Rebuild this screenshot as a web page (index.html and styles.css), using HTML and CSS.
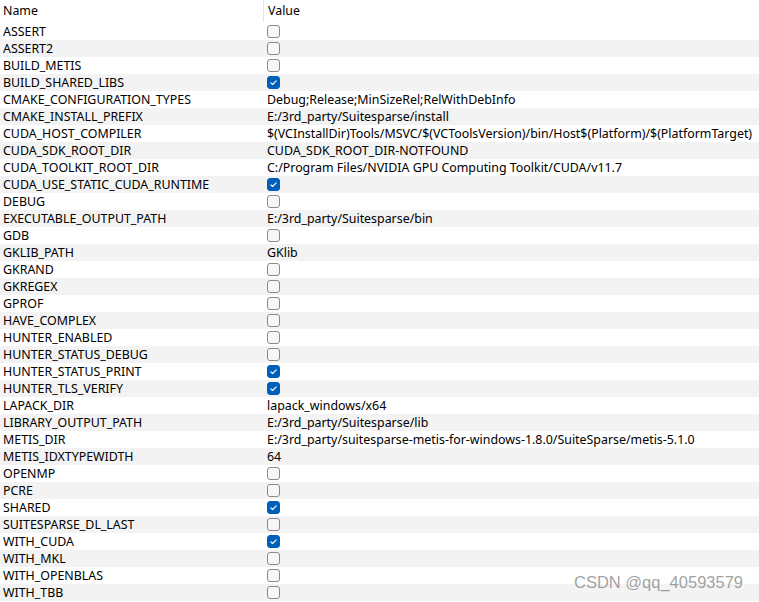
FILE: index.html
```html
<!DOCTYPE html>
<html>
<head>
<meta charset="utf-8">
<link rel="stylesheet" href="styles.css">
</head>
<body>
<div class="table">
  <div class="header">
    <div class="hname">Name</div>
    <div class="hvalue">Value</div>
  </div>
  <div class="row"><div class="name">ASSERT</div><div class="value"><span class="cb"></span></div></div>
  <div class="row"><div class="name">ASSERT2</div><div class="value"><span class="cb"></span></div></div>
  <div class="row"><div class="name">BUILD_METIS</div><div class="value"><span class="cb"></span></div></div>
  <div class="row"><div class="name">BUILD_SHARED_LIBS</div><div class="value"><span class="cb on"><svg viewBox="0 0 13 13" width="13" height="13"><path d="M3.8 6.8 L5.6 8.5 L9.2 4.8" fill="none" stroke="#fff" stroke-width="1.1" stroke-linecap="round" stroke-linejoin="round"/></svg></span></div></div>
  <div class="row"><div class="name">CMAKE_CONFIGURATION_TYPES</div><div class="value">Debug;Release;MinSizeRel;RelWithDebInfo</div></div>
  <div class="row"><div class="name">CMAKE_INSTALL_PREFIX</div><div class="value">E:/3rd_party/Suitesparse/install</div></div>
  <div class="row"><div class="name">CUDA_HOST_COMPILER</div><div class="value">$(VCInstallDir)Tools/MSVC/$(VCToolsVersion)/bin/Host$(Platform)/$(PlatformTarget)</div></div>
  <div class="row"><div class="name">CUDA_SDK_ROOT_DIR</div><div class="value">CUDA_SDK_ROOT_DIR-NOTFOUND</div></div>
  <div class="row"><div class="name">CUDA_TOOLKIT_ROOT_DIR</div><div class="value">C:/Program Files/NVIDIA GPU Computing Toolkit/CUDA/v11.7</div></div>
  <div class="row"><div class="name">CUDA_USE_STATIC_CUDA_RUNTIME</div><div class="value"><span class="cb on"><svg viewBox="0 0 13 13" width="13" height="13"><path d="M3.8 6.8 L5.6 8.5 L9.2 4.8" fill="none" stroke="#fff" stroke-width="1.1" stroke-linecap="round" stroke-linejoin="round"/></svg></span></div></div>
  <div class="row"><div class="name">DEBUG</div><div class="value"><span class="cb"></span></div></div>
  <div class="row"><div class="name">EXECUTABLE_OUTPUT_PATH</div><div class="value">E:/3rd_party/Suitesparse/bin</div></div>
  <div class="row"><div class="name">GDB</div><div class="value"><span class="cb"></span></div></div>
  <div class="row"><div class="name">GKLIB_PATH</div><div class="value">GKlib</div></div>
  <div class="row"><div class="name">GKRAND</div><div class="value"><span class="cb"></span></div></div>
  <div class="row"><div class="name">GKREGEX</div><div class="value"><span class="cb"></span></div></div>
  <div class="row"><div class="name">GPROF</div><div class="value"><span class="cb"></span></div></div>
  <div class="row"><div class="name">HAVE_COMPLEX</div><div class="value"><span class="cb"></span></div></div>
  <div class="row"><div class="name">HUNTER_ENABLED</div><div class="value"><span class="cb"></span></div></div>
  <div class="row"><div class="name">HUNTER_STATUS_DEBUG</div><div class="value"><span class="cb"></span></div></div>
  <div class="row"><div class="name">HUNTER_STATUS_PRINT</div><div class="value"><span class="cb on"><svg viewBox="0 0 13 13" width="13" height="13"><path d="M3.8 6.8 L5.6 8.5 L9.2 4.8" fill="none" stroke="#fff" stroke-width="1.1" stroke-linecap="round" stroke-linejoin="round"/></svg></span></div></div>
  <div class="row"><div class="name">HUNTER_TLS_VERIFY</div><div class="value"><span class="cb on"><svg viewBox="0 0 13 13" width="13" height="13"><path d="M3.8 6.8 L5.6 8.5 L9.2 4.8" fill="none" stroke="#fff" stroke-width="1.1" stroke-linecap="round" stroke-linejoin="round"/></svg></span></div></div>
  <div class="row"><div class="name">LAPACK_DIR</div><div class="value">lapack_windows/x64</div></div>
  <div class="row"><div class="name">LIBRARY_OUTPUT_PATH</div><div class="value">E:/3rd_party/Suitesparse/lib</div></div>
  <div class="row"><div class="name">METIS_DIR</div><div class="value">E:/3rd_party/suitesparse-metis-for-windows-1.8.0/SuiteSparse/metis-5.1.0</div></div>
  <div class="row"><div class="name">METIS_IDXTYPEWIDTH</div><div class="value">64</div></div>
  <div class="row"><div class="name">OPENMP</div><div class="value"><span class="cb"></span></div></div>
  <div class="row"><div class="name">PCRE</div><div class="value"><span class="cb"></span></div></div>
  <div class="row"><div class="name">SHARED</div><div class="value"><span class="cb on"><svg viewBox="0 0 13 13" width="13" height="13"><path d="M3.8 6.8 L5.6 8.5 L9.2 4.8" fill="none" stroke="#fff" stroke-width="1.1" stroke-linecap="round" stroke-linejoin="round"/></svg></span></div></div>
  <div class="row"><div class="name">SUITESPARSE_DL_LAST</div><div class="value"><span class="cb"></span></div></div>
  <div class="row"><div class="name">WITH_CUDA</div><div class="value"><span class="cb on"><svg viewBox="0 0 13 13" width="13" height="13"><path d="M3.8 6.8 L5.6 8.5 L9.2 4.8" fill="none" stroke="#fff" stroke-width="1.1" stroke-linecap="round" stroke-linejoin="round"/></svg></span></div></div>
  <div class="row"><div class="name">WITH_MKL</div><div class="value"><span class="cb"></span></div></div>
  <div class="row"><div class="name">WITH_OPENBLAS</div><div class="value"><span class="cb"></span></div></div>
  <div class="row"><div class="name">WITH_TBB</div><div class="value"><span class="cb"></span></div></div>
</div>
<div class="watermark">CSDN @qq_40593579</div>
</body>
</html>
```
FILE: styles.css
```css
html, body {
  margin: 0;
  padding: 0;
  background: #ffffff;
}
body {
  width: 759px;
  height: 602px;
  overflow: hidden;
  position: relative;
  font-family: "Noto Sans", "Open Sans", sans-serif;
  font-size: 12.4px;
  color: #000000;
}
.table {
  display: flex;
  flex-direction: column;
}
.header {
  display: flex;
  height: 23px;
  align-items: stretch;
}
.hname {
  width: 260px;
  padding-left: 3px;
  line-height: 22px;
}
.hvalue {
  flex: 1;
  border-left: 1px solid #e5e5e5;
  height: 22px;
  line-height: 22px;
  padding-left: 4px;
}
.row {
  display: flex;
  height: 17px;
  align-items: center;
  white-space: nowrap;
}
.row:nth-child(odd) {
  background: #f3f3f3;
}
.name {
  width: 260px;
  padding-left: 3px;
  line-height: 17px;
}
.value {
  flex: 1;
  padding-left: 4px;
  line-height: 17px;
  display: flex;
  align-items: center;
  overflow: hidden;
}
.cb {
  display: inline-block;
  width: 11px;
  height: 11px;
  border: 1px solid #8a8a8a;
  border-radius: 3px;
  background: #f7f7f7;
  box-sizing: content-box;
  position: relative;
}
.cb.on {
  background: #005fb8;
  border-color: #005fb8;
}
.cb svg {
  position: absolute;
  left: -1px;
  top: -1px;
}
.watermark {
  position: absolute;
  left: 574px;
  top: 573px;
  font-family: "Liberation Sans", Arial, sans-serif;
  font-size: 16.5px;
  color: rgba(120, 120, 120, 0.7);
}
```
